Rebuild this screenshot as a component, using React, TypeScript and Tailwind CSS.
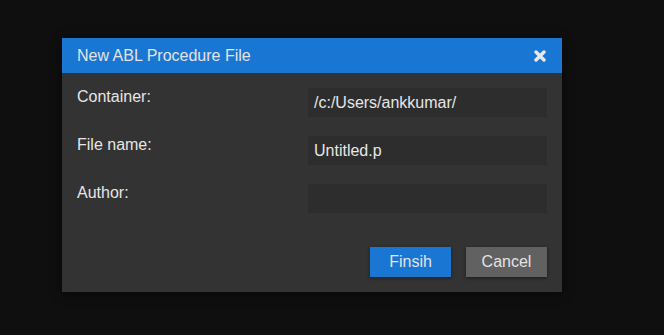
import React from 'react';

const rows = [
  { label: 'Container:', value: '/c:/Users/ankkumar/' },
  { label: 'File name:', value: 'Untitled.p' },
  { label: 'Author:', value: '' },
];

function App() {
  return (
    <div className="min-h-screen w-full bg-[#0f0f0f] pt-[38px] pl-[62px] font-['Liberation_Sans',Arial,sans-serif] text-[16px]">
      <div className="w-[500px] bg-[#333333] shadow-[0_2px_10px_rgba(0,0,0,0.6)]">
        {/* Header */}
        <div className="flex h-[35px] items-center justify-between bg-[#1976d2] pl-[15px] pr-[16px] text-[#e3e3e3]">
          <span className="leading-[18px]">New ABL Procedure File</span>
          <svg width="12" height="12" viewBox="0 0 12 12" className="mt-[1px]">
            <path d="M2 2 L10 10 M10 2 L2 10" stroke="#e8e8e8" strokeWidth="3.4" strokeLinecap="round" />
          </svg>
        </div>

        {/* Body */}
        <div className="px-[15px] pt-[15px] pb-[15px]">
          <div className="flex flex-col gap-[19px]">
            {rows.map((r) => (
              <div key={r.label} className="flex items-start">
                <label className="w-[231px] leading-[18px] text-[#e6e6e6]">{r.label}</label>
                <input
                  readOnly
                  value={r.value}
                  className="h-[29px] w-[239px] bg-[#2d2d2d] px-[6px] text-[16px] text-[#e6e6e6] outline-none"
                />
              </div>
            ))}
          </div>

          <div className="mt-[34px] flex justify-end gap-[15px]">
            <button className="h-[30px] w-[81px] bg-[#1976d2] text-[#e3e3e3] shadow-[0_1px_3px_rgba(0,0,0,0.5)]">
              Finsih
            </button>
            <button className="h-[30px] w-[81px] bg-[#616161] text-[#e3e3e3] shadow-[0_1px_3px_rgba(0,0,0,0.5)]">
              Cancel
            </button>
          </div>
        </div>
      </div>
    </div>
  );
}

export default App;
